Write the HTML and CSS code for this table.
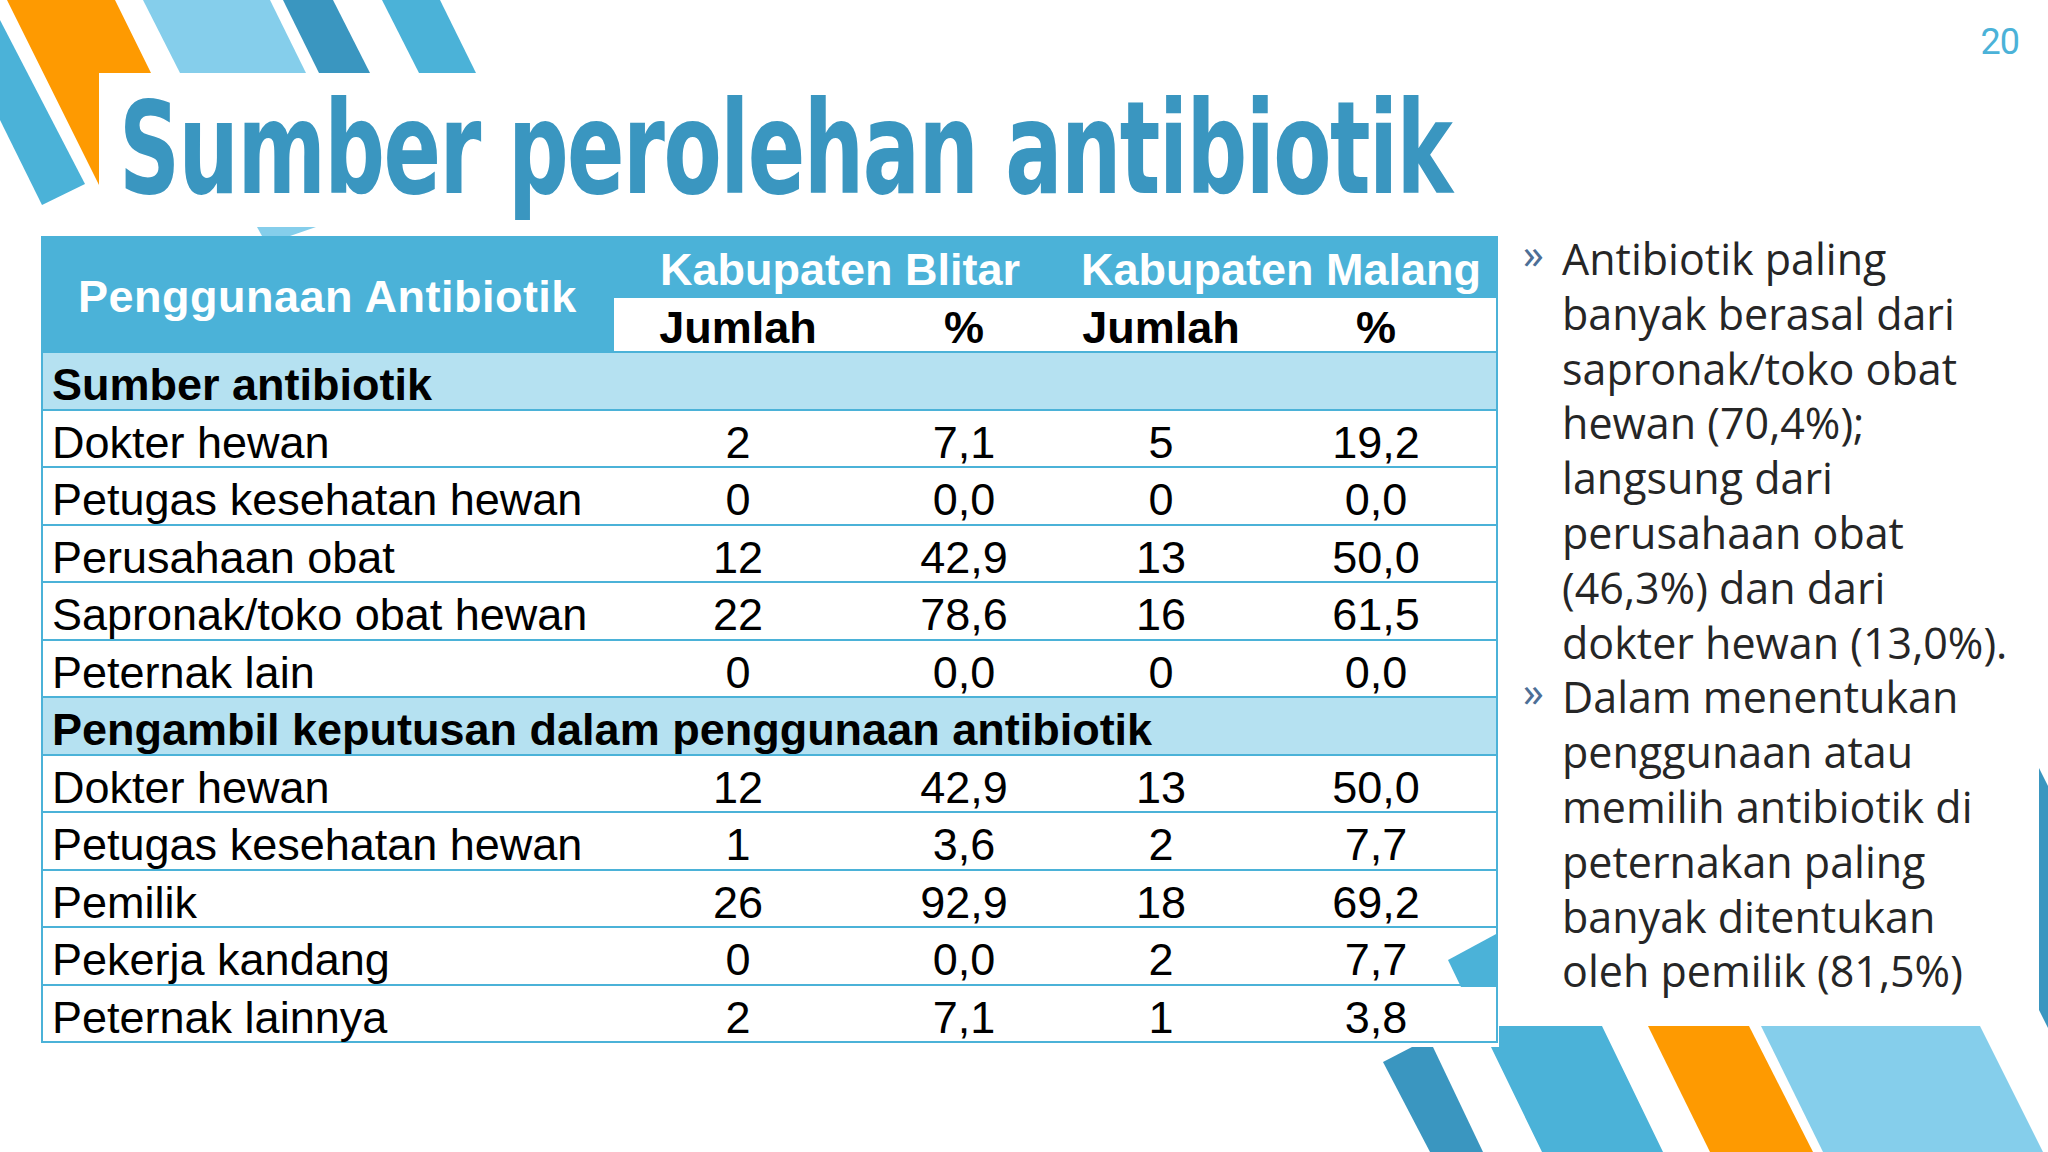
FILE: index.html
```html
<!DOCTYPE html>
<html lang="id">
<head>
<meta charset="utf-8">
<title>Sumber perolehan antibiotik</title>
<link rel="stylesheet" href="styles.css">
</head>
<body>
<div class="slide">
  <svg class="deco" width="2048" height="1152" viewBox="0 0 2048 1152" aria-hidden="true">
    <polygon class="c-blue" points="0,20 85,184 42,205 0,120"/>
    <polygon class="c-orange" points="7,0 115,0 151,73 99,73 99,185"/>
    <polygon class="c-light" points="143,0 270,0 306,73 180,73"/>
    <polygon class="c-dark" points="283,0 333,0 370,73 319,73"/>
    <polygon class="c-blue" points="382,0 440,0 476,73 419,73"/>
    <polygon class="c-light" points="257,227 316,227 290,236 262,236"/>
    <polygon class="c-dark" points="1383,1062 1412,1047 1433,1047 1483,1152 1430,1152"/>
    <polygon class="c-blue" points="1448,960 1498,933 1498,987 1461,987"/>
    <polygon class="c-blue" points="1499,1026 1602,1026 1663,1152 1542,1152 1491,1047 1499,1047"/>
    <polygon class="c-orange" points="1648,1026 1749,1026 1813,1152 1710,1152"/>
    <polygon class="c-light" points="1761,1026 1980,1026 2043,1152 1823,1152"/>
    <polygon class="c-dark" points="2039,768 2048,786 2048,1028 2039,1010"/>
  </svg>

  <header class="top">
    <h1 class="title">Sumber perolehan antibiotik</h1>
    <div class="pagenum">20</div>
  </header>

  <main class="main">
    <table class="data">
      <colgroup>
        <col class="w-label"><col class="w-j1"><col class="w-p1"><col class="w-j2"><col class="w-p2">
      </colgroup>
      <thead>
        <tr class="h1row">
          <th rowspan="2" class="h-label">Penggunaan Antibiotik</th>
          <th colspan="2">Kabupaten Blitar</th>
          <th colspan="2" class="last">Kabupaten Malang</th>
        </tr>
        <tr class="h2row">
          <th>Jumlah</th><th>%</th><th>Jumlah</th><th class="last">%</th>
        </tr>
      </thead>
      <tbody>
        <tr class="section"><td colspan="5" class="first last">Sumber antibiotik</td></tr>
        <tr><td class="first">Dokter hewan</td><td>2</td><td>7,1</td><td>5</td><td class="last">19,2</td></tr>
        <tr><td class="first">Petugas kesehatan hewan</td><td>0</td><td>0,0</td><td>0</td><td class="last">0,0</td></tr>
        <tr><td class="first">Perusahaan obat</td><td>12</td><td>42,9</td><td>13</td><td class="last">50,0</td></tr>
        <tr><td class="first">Sapronak/toko obat hewan</td><td>22</td><td>78,6</td><td>16</td><td class="last">61,5</td></tr>
        <tr><td class="first">Peternak lain</td><td>0</td><td>0,0</td><td>0</td><td class="last">0,0</td></tr>
        <tr class="section"><td colspan="5" class="first last">Pengambil keputusan dalam penggunaan antibiotik</td></tr>
        <tr><td class="first">Dokter hewan</td><td>12</td><td>42,9</td><td>13</td><td class="last">50,0</td></tr>
        <tr><td class="first">Petugas kesehatan hewan</td><td>1</td><td>3,6</td><td>2</td><td class="last">7,7</td></tr>
        <tr><td class="first">Pemilik</td><td>26</td><td>92,9</td><td>18</td><td class="last">69,2</td></tr>
        <tr><td class="first">Pekerja kandang</td><td>0</td><td>0,0</td><td>2</td><td class="last">7,7</td></tr>
        <tr><td class="first">Peternak lainnya</td><td>2</td><td>7,1</td><td>1</td><td class="last">3,8</td></tr>
      </tbody>
    </table>

    <ul class="notes">
      <li>Antibiotik paling<br>banyak berasal dari<br>sapronak/toko obat<br>hewan (70,4%);<br>langsung dari<br>perusahaan obat<br>(46,3%) dan dari<br>dokter hewan (13,0%).</li>
      <li>Dalam menentukan<br>penggunaan atau<br>memilih antibiotik di<br>peternakan paling<br>banyak ditentukan<br>oleh pemilik (81,5%)</li>
    </ul>
  </main>
</div>
</body>
</html>
```

FILE: styles.css
```css
html, body {
  margin: 0;
  padding: 0;
  background: #ffffff;
}

.slide {
  position: relative;
  width: 2048px;
  height: 1152px;
  overflow: hidden;
  box-sizing: border-box;
  padding: 0 29px 0 41px;
  background: #ffffff;
}

.deco {
  position: absolute;
  left: 0;
  top: 0;
  z-index: 2;
  pointer-events: none;
}
.c-blue { fill: #4bb2d8; }
.c-dark { fill: #3a96c0; }
.c-light { fill: #85ceeb; }
.c-orange { fill: #fe9a01; }

.top {
  display: flex;
  justify-content: space-between;
  align-items: flex-start;
  height: 236px;
}

.title {
  margin: 76px 0 0 78px;
  font-family: "DejaVu Sans Condensed", "Liberation Sans Narrow", "Liberation Sans", sans-serif;
  font-weight: bold;
  font-size: 128px;
  line-height: 145px;
  letter-spacing: -2px;
  color: #3a96c0;
  white-space: nowrap;
  transform: scaleX(0.736);
  transform-origin: 0 50%;
}

.pagenum {
  margin-top: 21px;
  font-family: Roboto, "Liberation Sans", sans-serif;
  font-size: 36px;
  line-height: 42px;
  letter-spacing: -1px;
  color: #4bb2d8;
}

.main {
  display: flex;
  align-items: flex-start;
}

.data {
  width: 1457px;
  flex: none;
  table-layout: fixed;
  border-collapse: separate;
  border-spacing: 0;
  font-family: "Liberation Sans", Arial, sans-serif;
  font-size: 45px;
  color: #000000;
  background: #ffffff;
}

.w-label { width: 573px; }
.w-j1 { width: 248px; }
.w-p1 { width: 204px; }
.w-j2 { width: 190px; }
.w-p2 { width: 242px; }

.data th {
  font-weight: bold;
  text-align: center;
  white-space: nowrap;
  padding: 0;
}

.h1row th {
  background: #4bb2d8;
  color: #ffffff;
  padding: 8px 0 2.5px;
  line-height: 51.5px;
}

.h1row th.h-label {
  vertical-align: middle;
  padding: 7px 0 0;
  letter-spacing: 0.5px;
  border-bottom: 2px solid #4bb2d8;
}

.h2row th {
  background: #ffffff;
  color: #000000;
  padding: 7px 0 0;
  line-height: 46px;
  border-bottom: 2px solid #4bb2d8;
}

.data th.last {
  border-right: 2px solid #4bb2d8;
}

.data td {
  padding: 9px 0 0;
  line-height: 46.5px;
  text-align: center;
  white-space: nowrap;
  border-bottom: 2px solid #4bb2d8;
}

.data td.first {
  text-align: left;
  padding-left: 9px;
  border-left: 2px solid #4bb2d8;
}

.data td.last {
  border-right: 2px solid #4bb2d8;
}

.section td {
  background: #b5e1f1;
  font-weight: bold;
}

.notes {
  list-style: none;
  margin: -4px 0 0 25px;
  padding: 0;
  font-family: "Open Sans", "Noto Sans", sans-serif;
  font-size: 43px;
  line-height: 54.8px;
  color: #262626;
  white-space: nowrap;
}

.notes li {
  padding-left: 39px;
  text-indent: -39px;
}

.notes li::before {
  content: "\00BB";
  display: inline-block;
  width: 39px;
  text-indent: 0;
  font-size: 42px;
  line-height: 40px;
  vertical-align: 6px;
  color: #4d6f96;
}
```
